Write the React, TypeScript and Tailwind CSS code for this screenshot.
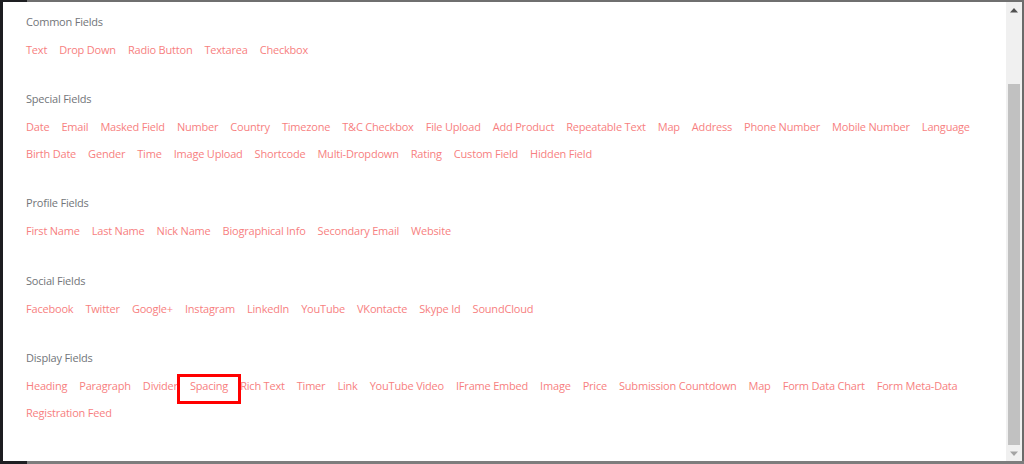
import React from "react";

const sections: { title: string; rows: string[][] }[] = [
  { title: "Common Fields", rows: [["Text", "Drop Down", "Radio Button", "Textarea", "Checkbox"]] },
  {
    title: "Special Fields",
    rows: [
      ["Date", "Email", "Masked Field", "Number", "Country", "Timezone", "T&C Checkbox", "File Upload", "Add Product", "Repeatable Text", "Map", "Address", "Phone Number", "Mobile Number", "Language"],
      ["Birth Date", "Gender", "Time", "Image Upload", "Shortcode", "Multi-Dropdown", "Rating", "Custom Field", "Hidden Field"],
    ],
  },
  { title: "Profile Fields", rows: [["First Name", "Last Name", "Nick Name", "Biographical Info", "Secondary Email", "Website"]] },
  { title: "Social Fields", rows: [["Facebook", "Twitter", "Google+", "Instagram", "LinkedIn", "YouTube", "VKontacte", "Skype Id", "SoundCloud"]] },
  {
    title: "Display Fields",
    rows: [
      ["Heading", "Paragraph", "Divider", "Spacing", "Rich Text", "Timer", "Link", "YouTube Video", "IFrame Embed", "Image", "Price", "Submission Countdown", "Map", "Form Data Chart", "Form Meta-Data"],
      ["Registration Feed"],
    ],
  },
];

export default function App() {
  return (
    <div
      className="w-[1024px] h-[464px] flex flex-col overflow-hidden bg-white"
      style={{ fontFamily: '"Open Sans", "Noto Sans", sans-serif' }}
    >
      <div className="h-[2px] flex shrink-0">
        <div className="w-[27px] bg-[#1e1f22]" />
        <div className="flex-1 bg-[#6f6f6f]" />
      </div>
      <div className="flex-1 flex min-h-0">
        <div className="w-[3px] bg-[#1c1d20] shrink-0" />
        <div className="flex-1 bg-white pl-[23px] pt-[7px] text-[11px] tracking-[-0.2px]">
          {sections.map((s) => (
            <div key={s.title} className="mb-[23.2px]">
              <div className="h-[26px] leading-[26px] text-[#727579]">{s.title}</div>
              <div className="mt-[1.75px]">
                {s.rows.map((row, i) => (
                  <div key={i} className="flex gap-x-[12px] leading-[26.5px] h-[26.5px] whitespace-nowrap">
                    {row.map((item) => (
                      <span key={item} className="relative text-[#f77f7f]">
                        {item}
                        {item === "Spacing" && (
                          <span className="absolute left-[-13px] right-[-13px] top-[1px] bottom-[-4px] border-[3px] border-[#ff0000]" />
                        )}
                      </span>
                    ))}
                  </div>
                ))}
              </div>
            </div>
          ))}
        </div>
        <div className="w-[16px] bg-[#f0f0f0] flex flex-col shrink-0">
          <div className="h-[16px] flex items-center justify-center">
            <svg width="8" height="5" viewBox="0 0 8 5">
              <polygon points="4,0 8,4.5 0,4.5" fill="#505050" />
            </svg>
          </div>
          <div className="h-[66px]" />
          <div className="flex-1 mx-[2px] bg-[#c1c1c1]" />
          <div className="h-[16px] flex items-center justify-center">
            <svg width="8" height="5" viewBox="0 0 8 5">
              <polygon points="0,0.5 8,0.5 4,5" fill="#a3a3a3" />
            </svg>
          </div>
        </div>
        <div className="w-[2px] bg-[#6a6a6a] shrink-0" />
      </div>
      <div className="h-[3px] flex shrink-0">
        <div className="w-[27px] bg-[#1e1f22]" />
        <div className="flex-1 bg-[#7d7d7d]" />
      </div>
    </div>
  );
}
